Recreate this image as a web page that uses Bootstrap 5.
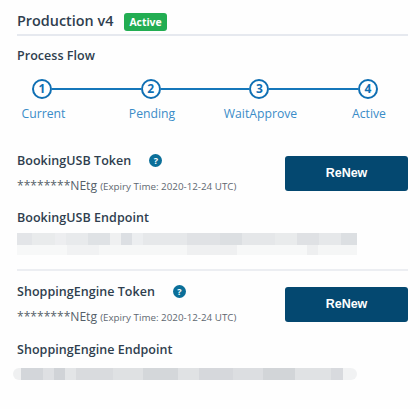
<!DOCTYPE html>
<html lang="en">
<head>
<meta charset="utf-8">
<title>Production v4</title>
<link href="https://cdn.jsdelivr.net/npm/bootstrap@5.3.0/dist/css/bootstrap.min.css" rel="stylesheet">
<style>
html,body{height:409px;overflow:hidden;background:#fefefe;font-family:"Open Sans",sans-serif;color:#2c3e50}
.page-wrap{padding:0 12px 0 17px}
.title-row{height:36px;padding-top:9px;border-bottom:2px solid #e6e9ef;gap:11px}
.title-text{font-size:14.4px;font-weight:600;line-height:24px;color:#2f3e4e}
.state-tag{background:#22ad52;color:#fff;font-size:10.4px;font-weight:700;line-height:18px;height:18px;padding:0 5px;border-radius:3px;margin-top:4px}
.sub-head{font-size:12.5px;font-weight:600;line-height:18px;color:#2f3e4e;letter-spacing:.04px}
.flow-head{margin-top:11px}
.flow{margin:14px -12px 0 -17px;padding:0 8px 0 .5px;height:66px}
.flow-line{padding:0 34px 0 31.5px}
.flow-num{width:20px;height:20px;flex:none;border:2px solid #0f6fb3;border-radius:50%;color:#0f6fb3;background:#fff;font-size:12px;font-weight:700;line-height:16px;text-align:center}
.flow-link{height:2px;flex:1;background:#1577ba}
.flow-labels{display:grid;grid-template-columns:repeat(4,86px);justify-content:space-between;margin-top:5px}
.flow-labels span{font-size:12.2px;line-height:20px;color:#3a8cc8;text-align:center}
.token-block{height:63px}
.token-text{padding-top:7px}
.token-block-low{height:69px}
.token-block-low .token-text{padding-top:12px}
.head-gap{gap:18px}
.help-dot{width:13px;height:13px;margin-top:-2px;border-radius:50%;background:#0b6f99;color:#fff;font-size:9px;font-weight:700;line-height:13px;text-align:center;flex:none}
.token-line{font-size:12.1px;line-height:20px;color:#555f69;margin-top:6px;white-space:nowrap}
.token-line small{font-size:9.8px;color:#5f6871}
.renew-btn{width:123px;height:35px;margin-top:11px;background:#044870;border:0;border-radius:3px;color:#fff;font-family:"Liberation Sans",sans-serif;font-size:12.5px;font-weight:700;flex:none}
.token-block-low .renew-btn{margin-top:16px}
.end-head{padding-top:1px}
.blur-one{margin-top:6px;width:340px}
.blur-a{height:12px;background:linear-gradient(90deg,#e3e5e8 0 15px,#e9ebec 15px 38px,#edeef0 38px 49px,#e8eaec 49px 71px,#dfe2e5 71px 93px,#eff0f1 93px 104px,#dcdfe3 104px 115px,#eceef0 115px 126px,#e6e8ea 126px 170px,#e0e2e5 170px 203px,#dcdfe2 203px 225px,#e5e7e9 225px 258px,#e9ebec 258px 280px,#dfe1e4 280px 302px,#e6e8ea 302px 324px,#dcdfe2 324px 340px)}
.blur-b{height:10px;background:linear-gradient(90deg,#f7f8f8 0 50px,#f1f2f3 50px 82px,#f6f7f7 82px 170px,#eff0f1 170px 220px,#f7f8f8 220px 290px,#eeeff0 290px 301px,#f5f6f6 301px 340px)}
.split-line{border-top:2px solid #eceef2;margin-top:14px}
.blur-two{margin:9px 0 0 -4px;width:344px}
.blur-c{height:12px;border-radius:6px;background:linear-gradient(90deg,#eff0f1 0 8px,#d3d6da 8px 30px,#dee0e3 30px 41px,#d0d3d7 41px 52px,#e3e5e7 52px 63px,#d9dbde 63px 100px,#dfe1e3 100px 130px,#d4d7da 130px 165px,#e0e2e4 165px 186px,#d6d8dc 186px 220px,#dcdee1 220px 250px,#d2d5d8 250px 282px,#e0e2e4 282px 318px,#d8dade 318px 330px,#f1f2f3 330px 344px)}
</style>
</head>
<body>
<div class="page-wrap">
  <div class="d-flex align-items-start title-row">
    <span class="title-text">Production v4</span>
    <span class="state-tag">Active</span>
  </div>
  <div class="sub-head flow-head">Process Flow</div>
  <div class="flow">
    <div class="d-flex align-items-center flow-line">
      <div class="flow-num">1</div><div class="flow-link"></div>
      <div class="flow-num">2</div><div class="flow-link"></div>
      <div class="flow-num">3</div><div class="flow-link"></div>
      <div class="flow-num">4</div>
    </div>
    <div class="flow-labels"><span>Current</span><span>Pending</span><span>WaitApprove</span><span>Active</span></div>
  </div>

  <div class="d-flex justify-content-between token-block">
    <div class="token-text">
      <div class="d-flex align-items-center head-gap sub-head">BookingUSB Token <span class="help-dot">?</span></div>
      <div class="token-line">********NEtg <small>(Expiry Time: 2020-12-24 UTC)</small></div>
    </div>
    <button class="btn renew-btn" type="button">ReNew</button>
  </div>
  <div class="sub-head end-head">BookingUSB Endpoint</div>
  <div class="blur-one"><div class="blur-a"></div><div class="blur-b"></div></div>
  <div class="split-line"></div>

  <div class="d-flex justify-content-between token-block token-block-low">
    <div class="token-text">
      <div class="d-flex align-items-center head-gap sub-head">ShoppingEngine Token <span class="help-dot">?</span></div>
      <div class="token-line">********NEtg <small>(Expiry Time: 2020-12-24 UTC)</small></div>
    </div>
    <button class="btn renew-btn" type="button">ReNew</button>
  </div>
  <div class="sub-head end-head">ShoppingEngine Endpoint</div>
  <div class="blur-two"><div class="blur-c"></div></div>
</div>
<script src="https://cdn.jsdelivr.net/npm/bootstrap@5.3.0/dist/js/bootstrap.bundle.min.js"></script>
</body>
</html>
